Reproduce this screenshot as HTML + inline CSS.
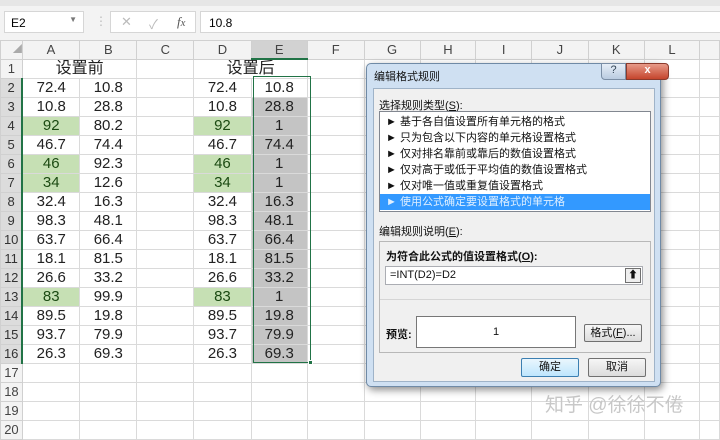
<!DOCTYPE html>
<html><head><meta charset="utf-8"><style>
*{margin:0;padding:0;box-sizing:border-box}
body{width:720px;height:432px;overflow:hidden;background:#fff;font-family:"Liberation Sans","Noto Sans CJK SC",sans-serif;position:relative}
.top{position:absolute;left:0;top:0;width:720px;height:40px;background:#f3f3f3;border-top:6px solid #e6e6e6}
.box{position:absolute;background:#fff;border:1px solid #d6d6d6}
table{position:absolute;left:0;top:40px;border-collapse:collapse;table-layout:fixed}
td{border:1px solid #dadada;height:19px;text-align:center;font-size:15px;color:#222;padding:0;line-height:17px;overflow:hidden;white-space:nowrap}
tr.h td{height:17px;background:#f3f3f3;color:#444;font-size:13px;border-color:#d0d0d0}
td.r{background:#f3f3f3;color:#444;font-size:13px;border-color:#d0d0d0}
td.rs{background:#dcdcdc;color:#333;border-right:2px solid #217346}
td.g{background:#c6e0b4;color:#1b4a12}
td.x{background:#c4c4c4}
td.t{font-size:16px}
.dlg{position:absolute;left:366px;top:63px;width:295px;height:324px;background:#cfe0f2;border:1px solid #6f8aa6;border-radius:5px;box-shadow:2px 3px 8px rgba(0,0,0,.45);font-family:"Liberation Sans","Noto Sans CJK SC",sans-serif;font-size:11px;color:#111}
.abs{position:absolute}
</style></head><body>
<div class="top"></div>
<div class="box" style="left:4px;top:11px;width:80px;height:22px;font-size:12px;padding:4px 6px">E2<span style="position:absolute;right:6px;top:3px;font-size:8px;color:#777">▼</span></div>
<div class="abs" style="left:95px;top:14px;color:#bbb;font-size:12px">⋮</div>
<div class="box" style="left:110px;top:11px;width:86px;height:22px;color:#bbb;font-size:13px"><span class="abs" style="left:10px;top:2px">✕</span><span class="abs" style="left:38px;top:2px">✓</span><span class="abs" style="left:66px;top:2px;color:#555;font-style:italic;font-family:'Liberation Serif',serif">f<small>x</small></span></div>
<div class="box" style="left:200px;top:11px;width:525px;height:22px;font-size:12px;padding:4px 8px">10.8</div>
<table>
<colgroup><col style="width:22px"><col style="width:58px"><col style="width:58px"><col style="width:58px"><col style="width:58px"><col style="width:57px"><col style="width:58px"><col style="width:57px"><col style="width:57px"><col style="width:57px"><col style="width:58px"><col style="width:57px"><col style="width:57px"><col style="width:20px"></colgroup>
<tr class="h"><td style="color:#aaa;font-size:9px;text-align:right">◢</td><td>A</td><td>B</td><td>C</td><td>D</td><td style="background:#d2d2d2;border-bottom:2px solid #217346">E</td><td>F</td><td>G</td><td>H</td><td>I</td><td>J</td><td>K</td><td>L</td><td></td></tr>
<tr><td class="r">1</td><td colspan="2" class="t">设置前</td><td></td><td colspan="2" class="t">设置后</td><td></td><td></td><td></td><td></td><td></td><td></td><td></td><td></td></tr>
<tr><td class="r rs">2</td><td>72.4</td><td>10.8</td><td></td><td>72.4</td><td>10.8</td><td></td><td></td><td></td><td></td><td></td><td></td><td></td><td></td></tr>
<tr><td class="r rs">3</td><td>10.8</td><td>28.8</td><td></td><td>10.8</td><td class="x">28.8</td><td></td><td></td><td></td><td></td><td></td><td></td><td></td><td></td></tr>
<tr><td class="r rs">4</td><td class="g">92</td><td>80.2</td><td></td><td class="g">92</td><td class="x">1</td><td></td><td></td><td></td><td></td><td></td><td></td><td></td><td></td></tr>
<tr><td class="r rs">5</td><td>46.7</td><td>74.4</td><td></td><td>46.7</td><td class="x">74.4</td><td></td><td></td><td></td><td></td><td></td><td></td><td></td><td></td></tr>
<tr><td class="r rs">6</td><td class="g">46</td><td>92.3</td><td></td><td class="g">46</td><td class="x">1</td><td></td><td></td><td></td><td></td><td></td><td></td><td></td><td></td></tr>
<tr><td class="r rs">7</td><td class="g">34</td><td>12.6</td><td></td><td class="g">34</td><td class="x">1</td><td></td><td></td><td></td><td></td><td></td><td></td><td></td><td></td></tr>
<tr><td class="r rs">8</td><td>32.4</td><td>16.3</td><td></td><td>32.4</td><td class="x">16.3</td><td></td><td></td><td></td><td></td><td></td><td></td><td></td><td></td></tr>
<tr><td class="r rs">9</td><td>98.3</td><td>48.1</td><td></td><td>98.3</td><td class="x">48.1</td><td></td><td></td><td></td><td></td><td></td><td></td><td></td><td></td></tr>
<tr><td class="r rs">10</td><td>63.7</td><td>66.4</td><td></td><td>63.7</td><td class="x">66.4</td><td></td><td></td><td></td><td></td><td></td><td></td><td></td><td></td></tr>
<tr><td class="r rs">11</td><td>18.1</td><td>81.5</td><td></td><td>18.1</td><td class="x">81.5</td><td></td><td></td><td></td><td></td><td></td><td></td><td></td><td></td></tr>
<tr><td class="r rs">12</td><td>26.6</td><td>33.2</td><td></td><td>26.6</td><td class="x">33.2</td><td></td><td></td><td></td><td></td><td></td><td></td><td></td><td></td></tr>
<tr><td class="r rs">13</td><td class="g">83</td><td>99.9</td><td></td><td class="g">83</td><td class="x">1</td><td></td><td></td><td></td><td></td><td></td><td></td><td></td><td></td></tr>
<tr><td class="r rs">14</td><td>89.5</td><td>19.8</td><td></td><td>89.5</td><td class="x">19.8</td><td></td><td></td><td></td><td></td><td></td><td></td><td></td><td></td></tr>
<tr><td class="r rs">15</td><td>93.7</td><td>79.9</td><td></td><td>93.7</td><td class="x">79.9</td><td></td><td></td><td></td><td></td><td></td><td></td><td></td><td></td></tr>
<tr><td class="r rs">16</td><td>26.3</td><td>69.3</td><td></td><td>26.3</td><td class="x">69.3</td><td></td><td></td><td></td><td></td><td></td><td></td><td></td><td></td></tr>
<tr><td class="r">17</td><td></td><td></td><td></td><td></td><td></td><td></td><td></td><td></td><td></td><td></td><td></td><td></td><td></td></tr>
<tr><td class="r">18</td><td></td><td></td><td></td><td></td><td></td><td></td><td></td><td></td><td></td><td></td><td></td><td></td><td></td></tr>
<tr><td class="r">19</td><td></td><td></td><td></td><td></td><td></td><td></td><td></td><td></td><td></td><td></td><td></td><td></td><td></td></tr>
<tr><td class="r">20</td><td></td><td></td><td></td><td></td><td></td><td></td><td></td><td></td><td></td><td></td><td></td><td></td><td></td></tr>
</table>
<div class="abs" style="left:253px;top:76px;width:58px;height:287px;border:1.5px solid #217346"></div>
<div class="abs" style="left:308px;top:360px;width:5px;height:5px;background:#217346;border:1px solid #fff"></div>
<div class="abs" style="left:545px;top:390px;font-size:19px;color:#c8c8c8">知乎 @徐徐不倦</div>

<div class="dlg">
<div class="abs" style="left:7px;top:4px;font-size:11px">编辑格式规则</div>
<div class="abs" style="left:234px;top:-1px;width:25px;height:17px;background:linear-gradient(#e6eef7,#b9cbe0);border:1px solid #7b8ea5;border-radius:0 0 0 4px;text-align:center;font-size:11px;color:#345">?</div>
<div class="abs" style="left:259px;top:-1px;width:43px;height:17px;background:linear-gradient(#e79a88,#c5452d);border:1px solid #8a3a2c;border-radius:0 4px 4px 0;text-align:center;color:#fff;font-weight:bold;font-size:11px">x</div>
<div class="abs" style="left:6px;top:24px;width:282px;height:294px;background:#f0f0f0;border:1px solid #9fb3c8">
<div class="abs" style="left:5px;top:8px">选择规则类型(<u>S</u>):</div>
<div class="abs" style="left:5px;top:22px;width:272px;height:101px;background:#fff;border:1px solid #828790;font-size:11px;line-height:16px">
<div style="padding-left:6px;margin-top:2px">► 基于各自值设置所有单元格的格式</div>
<div style="padding-left:6px">► 只为包含以下内容的单元格设置格式</div>
<div style="padding-left:6px">► 仅对排名靠前或靠后的数值设置格式</div>
<div style="padding-left:6px">► 仅对高于或低于平均值的数值设置格式</div>
<div style="padding-left:6px">► 仅对唯一值或重复值设置格式</div>
<div style="padding-left:6px;background:#3399ff;color:#dfefff">► 使用公式确定要设置格式的单元格</div>
</div>
<div class="abs" style="left:5px;top:134px">编辑规则说明(<u>E</u>):</div>
<div class="abs" style="left:5px;top:152px;width:272px;height:112px;border:1px solid #b8b8b8">
<div class="abs" style="left:6px;top:6px;font-weight:bold">为符合此公式的值设置格式(<u>O</u>):</div>
<div class="abs" style="left:5px;top:24px;width:258px;height:19px;background:#fff;border:1px solid #abadb3;padding:2px 4px">=INT(D2)=D2
<div class="abs" style="right:1px;top:1px;width:16px;height:15px;border:1px solid #707070;background:#eee;text-align:center;font-size:10px;line-height:13px">⬆</div></div>
<div class="abs" style="left:0;top:57px;width:270px;border-top:1px solid #d5d5d5"></div>
<div class="abs" style="left:6px;top:84px;font-weight:bold">预览:</div>
<div class="abs" style="left:36px;top:74px;width:160px;height:32px;background:#fff;border:1px solid #777;text-align:center;line-height:30px">1</div>
<div class="abs" style="left:204px;top:82px;width:58px;height:18px;background:linear-gradient(#f6f6f6,#dcdcdc);border:1px solid #707070;border-radius:2px;text-align:center;line-height:16px">格式(<u>F</u>)...</div>
</div>
<div class="abs" style="left:147px;top:269px;width:58px;height:19px;background:linear-gradient(#eaf6fd,#bee6fd);border:1px solid #3c7fb1;border-radius:2px;text-align:center;line-height:17px">确定</div>
<div class="abs" style="left:214px;top:269px;width:58px;height:19px;background:linear-gradient(#f6f6f6,#dcdcdc);border:1px solid #707070;border-radius:2px;text-align:center;line-height:17px">取消</div>
</div>
</div>
</body></html>
